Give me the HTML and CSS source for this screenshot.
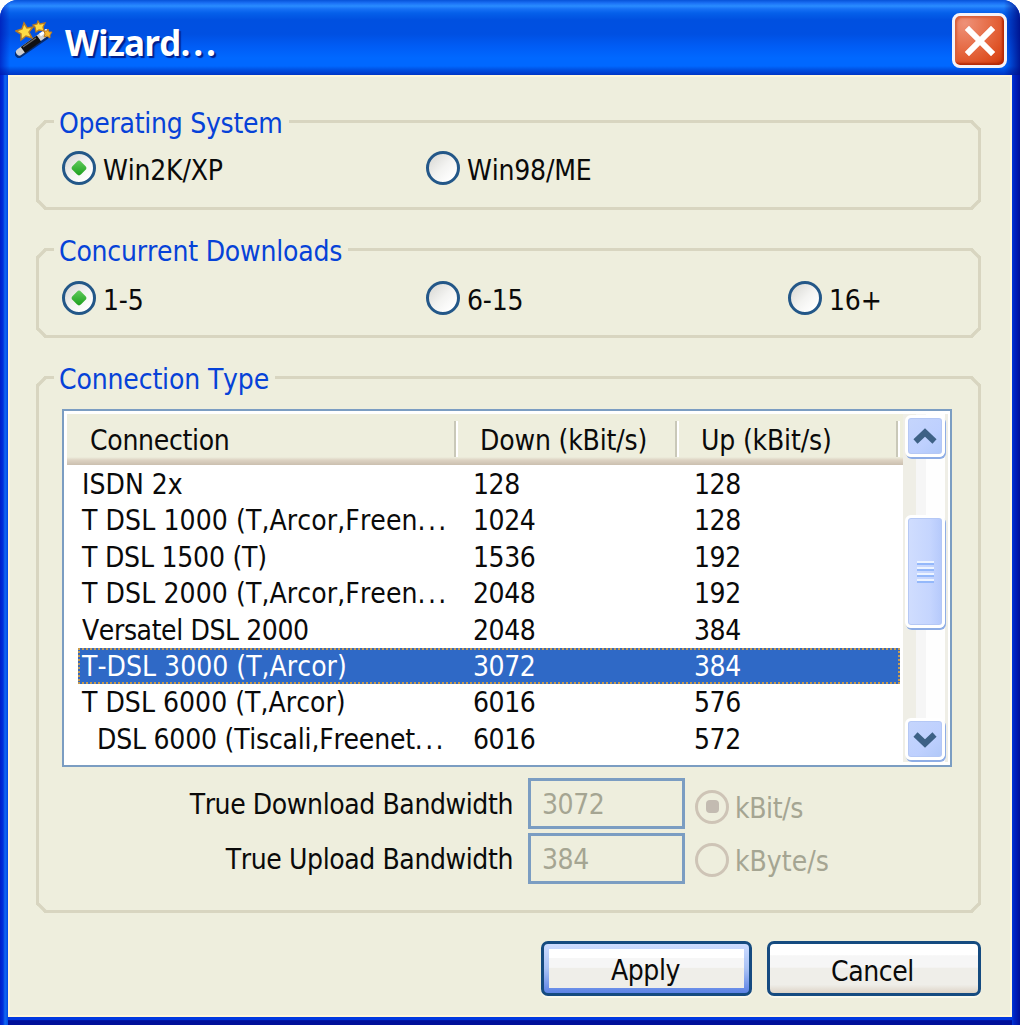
FILE: index.html
```html
<!DOCTYPE html>
<html lang="en">
<head>
<meta charset="utf-8">
<title>Wizard...</title>
<link rel="stylesheet" href="styles.css">
</head>
<body>
<div class="window">
  <header class="titlebar">
    <svg class="wand" width="38" height="38" viewBox="0 0 38 38">
      <path d="M4 34 L30 16" stroke="#07183f" stroke-opacity=".7" stroke-width="8" stroke-linecap="round"/>
      <path d="M4.500 32 L31 13" stroke="#cfcfcf" stroke-width="7" stroke-linecap="round"/>
      <path d="M8 30 L24 18.500" stroke="#111" stroke-width="7.500"/>
      <path d="M8 27 L21 18" stroke="#666" stroke-width="1.500"/>
      <path d="M25 15 L32 10" stroke="#fff" stroke-width="3"/>
      <path d="M9 3l3 5 6-1-4 5 3 6-6-2-5 4 0-6-5-3 6-2z" fill="#ffdc45" stroke="#b67a25" stroke-width="1.500"/>
      <path d="M23 1l2 3 5-1-2 4 1 4-5-1-3 2-1-5-2-2 4-1z" fill="#ffdc45" stroke="#b67a25" stroke-width="1.300"/>
      <path d="M33 9l1 3 3 0-2 3 0 3-3-2-3 1 1-3-1-3 3 0z" fill="#f6b72c" stroke="#b67a25"/>
    </svg>
    <h1 class="title">Wizard<span class="title-dots">...</span></h1>
    <button class="close" aria-label="Close"><svg width="30" height="30" viewBox="0 0 30 30"><path d="M4 4L26 26M26 4L4 26" stroke="#fff" stroke-width="6" stroke-linecap="square"/></svg></button>
  </header>
  <main class="client">
    <fieldset class="group group-os">
      <legend class="t-os">Operating System</legend>
      <div class="choices">
        <label class="choice"><span class="radio on"></span><span>Win2K/XP</span></label>
        <label class="choice"><span class="radio"></span><span>Win98/ME</span></label>
      </div>
    </fieldset>
    <fieldset class="group group-dl">
      <legend class="t-dl">Concurrent Downloads</legend>
      <div class="choices">
        <label class="choice"><span class="radio on"></span><span>1-5</span></label>
        <label class="choice"><span class="radio"></span><span>6-15</span></label>
        <label class="choice"><span class="radio"></span><span>16+</span></label>
      </div>
    </fieldset>
    <fieldset class="group group-ct">
      <legend class="t-ct">Connection Type</legend>
      <div class="list">
        <div class="table">
          <div class="head"><span>Connection</span><span>Down (kBit/s)</span><span>Up (kBit/s)</span></div>
          <div class="rows">
            <div class="row"><span class="wide">ISDN 2x</span><span>128</span><span>128</span></div>
            <div class="row"><span class="wider">T DSL 1000 (T,Arcor,Freen<b class="dots">...</b></span><span>1024</span><span>128</span></div>
            <div class="row"><span class="snug">T DSL 1500 (T)</span><span>1536</span><span>192</span></div>
            <div class="row"><span class="wider">T DSL 2000 (T,Arcor,Freen<b class="dots">...</b></span><span>2048</span><span>192</span></div>
            <div class="row"><span>Versatel DSL 2000</span><span>2048</span><span>384</span></div>
            <div class="row selected"><span class="wide">T-DSL 3000 (T,Arcor)</span><span>3072</span><span>384</span></div>
            <div class="row"><span class="wide">T DSL 6000 (T,Arcor)</span><span>6016</span><span>576</span></div>
            <div class="row"><span class="snug indent">DSL 6000 (Tiscali,Freenet<b class="dots">...</b></span><span>6016</span><span>572</span></div>
          </div>
        </div>
        <div class="scrollbar">
          <div class="sb-btn"><svg width="24" height="17" viewBox="0 0 24 17"><path d="M2.500 13.500L12 4.500l9.500 9" fill="none" stroke="#3d6185" stroke-width="6"/></svg></div>
          <div class="sb-thumb"><i></i><i></i><i></i><i></i></div>
          <div class="sb-btn"><svg width="24" height="17" viewBox="0 0 24 17"><path d="M2.500 3.500L12 12.500l9.500-9" fill="none" stroke="#3d6185" stroke-width="6"/></svg></div>
        </div>
      </div>
      <div class="bandwidth">
        <span class="lbl">True Download Bandwidth</span><span class="field">3072</span>
        <label class="unit"><span class="radio off on"></span><span>kBit/s</span></label>
        <span class="lbl">True Upload Bandwidth</span><span class="field">384</span>
        <label class="unit unit-byte"><span class="radio off"></span><span>kByte/s</span></label>
      </div>
    </fieldset>
    <footer class="actions">
      <button class="btn default">Apply</button>
      <button class="btn cancel">Cancel</button>
    </footer>
  </main>
</div>
</body>
</html>
```
FILE: styles.css
```css
* { box-sizing: border-box; }
html, body { margin: 0; background: #fff; }
body {
  font-family: "DejaVu Sans Condensed", "DejaVu Sans", sans-serif;
  font-stretch: condensed;
  font-kerning: none;
  font-size: 28px;
  letter-spacing: -0.4px;
  line-height: 34px;
  color: #0a0a0a;
  white-space: nowrap;
  overflow: hidden;
}
.window {
  width: 1020px; height: 1025px;
  border-radius: 18px 18px 0 0;
  overflow: hidden;
  background: linear-gradient(90deg, #0020c8 0, #0030dc 3px, #1268f0 5px, #0050e8 8px, #0050e8 1010px, #0025c5 1014px, #00109a 1020px);
}
.titlebar {
  display: flex; align-items: flex-start;
  height: 75px; padding: 0 13px 0 15px;
  background:
    linear-gradient(90deg, rgba(0,10,170,.6), transparent 10px, transparent 1004px, rgba(0,10,130,.85) 1020px),
    linear-gradient(180deg, #0752d8 0, #1a70f5 3px, #2a8cff 6px, #1670f5 9px, #0560ea 13px, #0050e0 20px, #0050e2 34px, #005cf5 46px, #0068ff 58px, #0068ff 66px, #004fe0 70px, #0036c5 75px);
}
.wand { margin-top: 20px; fill: none; flex: none; }
.title {
  flex: 1; margin: 19px 0 0 12px;
  font: bold 35px/48px "Open Sans", "Noto Sans", sans-serif;
  letter-spacing: -0.9px; color: #fff;
  text-shadow: 2px 2px 1px #001f8c;
}
.title-dots { letter-spacing: 2.8px; }
.close {
  display: grid; place-items: center;
  width: 55px; height: 55px; margin: 13px 0 0; padding: 0;
  border: 3px solid #f5f3f8; border-radius: 8px;
  background: radial-gradient(circle at 20% 15%, #ee9178 0, #e5673f 50%, #dc4a1c 80%, #c83208 100%);
  box-shadow: inset -2px -2px 2px #b52a08, inset 2px 2px 2px #d8603c;
}
.client {
  height: 942px; margin: 0 8px 0 8px; padding: 27px 29px 0 26px;
  background: #eeeedd;
  border: solid #fdf6dc; border-width: 2px;
  box-shadow: 0 3px 1px #0038e0, 0 10px 0 #00109a;
}
.group {
  margin: 0; min-width: 0; padding: 0 23px;
  border: 3px solid #d8d5c0; border-radius: 9px; corner-shape: bevel;
}
.group legend { height: 34px; margin-left: -8px; padding: 0 6px 0 5px; line-height: 40px; color: #0642d8; }
.t-os { letter-spacing: -0.27px; }
.t-dl { letter-spacing: -0.2px; }
.t-ct { letter-spacing: -0.15px; }
.group-os { height: 106px; }
.group-dl { height: 106px; margin-top: 22px; }
.group-ct { height: 553px; margin-top: 22px; padding: 15px 26px 0 23px; }
.choices { display: grid; grid-template-columns: 364px 362px 1fr; padding-top: 13px; }
.group-dl .choices { padding-top: 15px; }
.choice, .unit { display: flex; align-items: center; }
.choice { gap: 7px; line-height: 39px; height: 34px; letter-spacing: -0.2px; }
.radio {
  display: grid; place-items: center; flex: none;
  width: 34px; height: 34px;
  border: 3px solid #235788; border-radius: 50%;
  background: linear-gradient(135deg, #dcdcd8 10%, #f3f3f1 50%, #fff 85%);
}
.choice > span:last-child { height: 34px; }
.radio.on::after {
  content: ""; width: 12px; height: 12px; border-radius: 3px;
  background: linear-gradient(135deg, #62cd60, #1a9d1a); transform: rotate(45deg);
}
.radio.off { border-color: #cec4b6; background: none; }
.radio.off.on::after { width: 13px; height: 13px; border-radius: 4px; background: #c3bbb1; transform: none; }
.list {
  display: grid; grid-template-columns: 1fr 45px;
  width: 890px; height: 358px; padding: 3px 2px 3px 3px;
  border: 2.500px solid #7b9dc2; background: #fff;
}
.head {
  display: grid; grid-template-columns: 389px 221px 1fr;
  height: 51px; padding: 0 5px 0 0;
  background: linear-gradient(180deg, #eeeedd 0, #eeeedd 43px, #ddd3c3 46px, #cbbfaf 51px);
}
.head span {
  height: 36px; margin-top: 7px; padding: 1px 0 0 24px;
  border-right: 2px solid #c9c8b8; box-shadow: 2px 0 0 #fff; line-height: 37px;
  letter-spacing: -0.17px;
}
.head span:first-child { padding-left: 23px; letter-spacing: -0.3px; }
.rows { padding: 1px 3px 0 11px; }
.row {
  display: grid; grid-template-columns: 391px 221px 1fr;
  height: 36.4px; padding-left: 4px; line-height: 38px;
}
.row .snug { letter-spacing: -0.22px; }
.row .wide { letter-spacing: 0.03px; }
.row .wider { letter-spacing: 0.1px; }
.row .indent { padding-left: 15px; }
.row .dots { font-weight: normal; letter-spacing: 2.3px; }
.selected { background: #2f69c6; color: #fff; outline: 2px dotted #c99b4c; outline-offset: -2px; }
.scrollbar {
  display: flex; flex-direction: column; align-items: center;
  padding: 1px 3px 0 2px;
  background: linear-gradient(90deg, #efeee6 0 13px, #f6f6f6 13px 23px, #fefefe 23px 42px, #efeee6 42px);
}
.sb-btn, .sb-thumb {
  width: 40px; border: 3px solid #fff; border-radius: 6px;
  background: linear-gradient(135deg, #c5d5fc, #bed0fe 60%, #b0c8f8);
  box-shadow: inset 0 0 0 1px #b5c8f5, 1px 2px 0 #8eade5;
}
.sb-btn { display: grid; place-items: center; height: 42px; flex: none; }
.sb-thumb {
  display: flex; flex-direction: column; align-items: center; justify-content: center; gap: 2px;
  height: 113px; margin: 58px 0 90px; flex: none;
  background: linear-gradient(90deg, #d0ddfe, #c5d5fe 65%, #b5c9fb);
}
.sb-thumb i { width: 17px; height: 4px; border-top: 2px solid #edf4ff; border-bottom: 2px solid #94b8fa; }
.bandwidth {
  display: grid; grid-template-columns: 451px 157px 1fr; column-gap: 15px;
  grid-template-rows: 51px 51px; row-gap: 4px; padding-top: 11px;
}
.lbl { text-align: right; line-height: 53px; }
.field { border: 3px solid #7b9dc2; padding-left: 11px; line-height: 47px; color: #a5a592; }
.unit { gap: 6px; margin-left: -5px; padding-top: 6px; color: #a5a592; }
.unit > span:last-child { padding-top: 5px; }
.unit-byte { padding-top: 2px; letter-spacing: 0; }
.actions { display: flex; gap: 15px; justify-content: flex-end; margin-top: 28px; }
.btn {
  width: 211px; height: 55px; padding: 6px 3px 0 0;
  font: inherit; letter-spacing: inherit; color: inherit; font-kerning: none;
  border: 3px solid #154b80; border-radius: 7px;
  background: linear-gradient(180deg, #fff 0 22%, #f6f6f6 24% 47%, #efeee9 50% 83%, #ddd3c6 100%);
  box-shadow: 0 2px 0 #f9f8ec;
}
.cancel { width: 214px; }
.default {
  padding: 9px 7px 5px 5px;
  background:
    linear-gradient(180deg, #fff 0 22%, #f6f6f6 24% 47%, #efeee9 50%) center / 195px 39px no-repeat,
    linear-gradient(180deg, #cddcff, #a9c2f5 50%, #5c82e5);
}
```
